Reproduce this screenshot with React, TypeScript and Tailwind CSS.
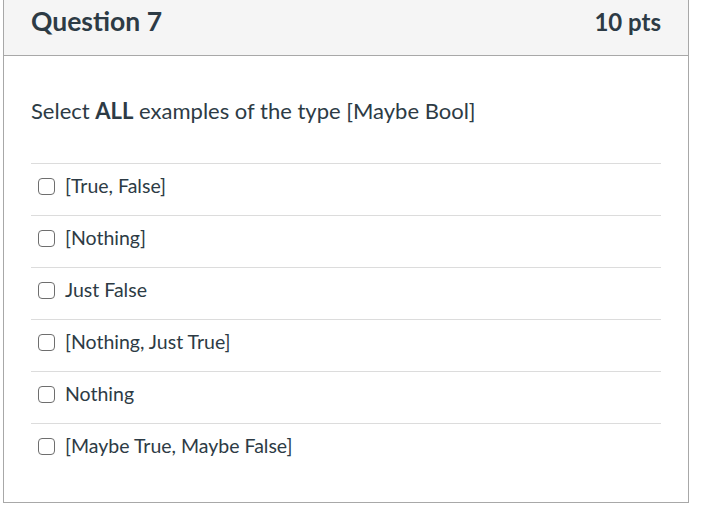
export default function App() {
  const answers = [
    "[True, False]",
    "[Nothing]",
    "Just False",
    "[Nothing, Just True]",
    "Nothing",
    "[Maybe True, Maybe False]",
  ];
  return (
    <div className="w-[708px] h-[512px] bg-white pl-[3px] font-['Lato','Noto_Sans',sans-serif] text-[#2d3b45]">
      <div className="w-[686px] border-x border-b border-[#a8a8a8] bg-white">
        <div className="h-[56px] bg-[#f5f5f5] border-b border-[#a8a8a8] px-[27px] flex items-baseline justify-between pt-[5px]">
          <h2 className="text-[26.5px] font-bold leading-[32px]">Question 7</h2>
          <div className="text-[24px] font-bold leading-[32px]">10 pts</div>
        </div>
        <div className="px-[27px] pt-[40px] pb-[27px]">
          <p className="text-[22px] leading-[30px]">
            Select <strong>ALL</strong> examples of the type [Maybe Bool]
          </p>
          <div className="mt-[37px]">
            {answers.map((a) => (
              <label
                key={a}
                className="h-[52px] border-t border-[#dcdcdc] flex items-center gap-[10px] pl-[7px] pb-[7px] text-[19.5px]"
              >
                <span className="w-[17px] h-[17px] rounded-[4px] border-[1.5px] border-[#6e6e6e] bg-white shrink-0" />
                <span>{a}</span>
              </label>
            ))}
          </div>
        </div>
      </div>
    </div>
  );
}
